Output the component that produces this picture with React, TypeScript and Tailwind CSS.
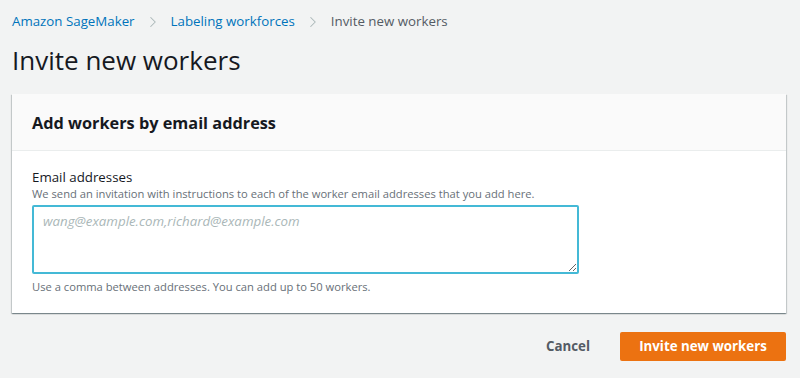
import { ChevronRight } from "lucide-react";

export default function App() {
  return (
    <div
      className="w-[800px] h-[378px] bg-[#f2f3f3] px-3 text-[#16191f] overflow-hidden"
      style={{ fontFamily: '"Open Sans", "Liberation Sans", sans-serif' }}
    >
      {/* breadcrumb */}
      <nav className="flex items-center h-[44px] text-[13.3px]">
        <a className="text-[#0073bb]">Amazon SageMaker</a>
        <ChevronRight className="mx-[9px] text-[#aab7b8]" size={18} strokeWidth={1.4} />
        <a className="text-[#0073bb]">Labeling workforces</a>
        <ChevronRight className="mx-[9px] text-[#aab7b8]" size={18} strokeWidth={1.4} />
        <span className="text-[#545b64]">Invite new workers</span>
      </nav>

      <h1 className="text-[26px] leading-[34px] mt-[-1px] mb-[17px]">Invite new workers</h1>

      <div className="w-[774px] bg-white shadow-[0_1px_1px_0_rgba(0,28,36,0.3),1px_1px_1px_0_rgba(0,28,36,0.15),-1px_1px_1px_0_rgba(0,28,36,0.15)]">
        <div className="h-[57px] bg-[#fafafa] border-b border-[#eaeded] flex items-center px-[20px] pt-[2px]">
          <h2 className="text-[16.3px] font-bold">Add workers by email address</h2>
        </div>
        <div className="px-[20px] pt-[17px] pb-[18px]">
          <div className="text-[13.3px] leading-[18px]">Email addresses</div>
          <div className="text-[11.2px] leading-[16px] text-[#687078]">
            We send an invitation with instructions to each of the worker email addresses that you add here.
          </div>
          <textarea
            className="mt-[3px] block w-[547px] h-[69px] border-2 border-[#44b9d6] rounded-[2px] px-[9px] py-[5px] text-[13.3px] italic placeholder:text-[#aab7b8] outline-none"
            placeholder="wang@example.com,richard@example.com"
          />
          <div className="text-[11.2px] leading-[16px] text-[#687078] mt-[5px]">
            Use a comma between addresses. You can add up to 50 workers.
          </div>
        </div>
      </div>

      <div className="flex justify-end items-center w-[774px] mt-[19px] gap-[30px]">
        <button className="text-[13.3px] font-bold text-[#545b64]">Cancel</button>
        <button className="h-[29px] w-[166px] bg-[#ec7211] text-white text-[13.3px] font-bold rounded-[2px]">
          Invite new workers
        </button>
      </div>
    </div>
  );
}
